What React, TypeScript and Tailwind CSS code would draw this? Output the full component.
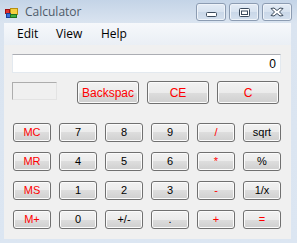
import React from "react";

const btnBase =
  "flex items-center justify-center rounded-[3px] border border-[#707070] bg-[linear-gradient(to_bottom,#f2f2f2_0%,#ebebeb_50%,#dddddd_50%,#cfcfcf_100%)] shadow-[inset_0_0_0_1px_#fbfbfb] text-[11px] leading-none font-['Liberation_Sans',Arial,sans-serif]";

function Btn({ label, red, className = "" }: { label: string; red?: boolean; className?: string }) {
  return (
    <div className={`${btnBase} ${red ? "text-[#ff0000]" : "text-black"} ${className}`}>{label}</div>
  );
}

function CaptionBtn({ children, w }: { children: React.ReactNode; w: string }) {
  return (
    <div
      className={`${w} h-[18px] flex items-center justify-center rounded-[3px] border border-[#8c9cb2] bg-[linear-gradient(to_bottom,#e4ecf6_0%,#d7e2ef_50%,#c9d7e8_50%,#d4e0ee_100%)] shadow-[inset_0_0_0_1px_#eef3f9]`}
    >
      {children}
    </div>
  );
}

export default function App() {
  const rows: { label: string; red?: boolean }[][] = [
    [{ label: "MC", red: true }, { label: "7" }, { label: "8" }, { label: "9" }, { label: "/", red: true }, { label: "sqrt" }],
    [{ label: "MR", red: true }, { label: "4" }, { label: "5" }, { label: "6" }, { label: "*", red: true }, { label: "%" }],
    [{ label: "MS", red: true }, { label: "1" }, { label: "2" }, { label: "3" }, { label: "-", red: true }, { label: "1/x" }],
    [{ label: "M+", red: true }, { label: "0" }, { label: "+/-" }, { label: "." }, { label: "+", red: true }, { label: "=", red: true }],
  ];
  return (
    <div className="w-[297px] h-[243px] overflow-hidden flex flex-col bg-[linear-gradient(to_bottom,#c4d4e7_0px,#dae4f0_23px,#dce6f2_100%)]">
      {/* Title bar */}
      <div className="h-[23px] flex items-start relative">
        <svg width="13" height="10" viewBox="0 0 13 10" className="ml-[5px] mt-[8px]">
          <rect x="0.5" y="1.5" width="4" height="4" fill="#e03030" stroke="#a01010" strokeWidth="1" />
          <rect x="5.5" y="0.5" width="7" height="6" fill="#f4d040" stroke="#b89010" strokeWidth="1" />
          <rect x="1.5" y="5.5" width="4" height="4" fill="#3a6fd8" stroke="#1a3f98" strokeWidth="1" />
          <rect x="5.5" y="6.5" width="6" height="3" fill="#40b040" stroke="#207020" strokeWidth="1" />
        </svg>
        <div className="ml-[7px] mt-[4px] text-[12px] leading-[16px] text-[#4d5a69] font-['Open_Sans',sans-serif]">
          Calculator
        </div>
        <div className="ml-auto mr-[5px] mt-[3px] flex gap-[3px]">
          <CaptionBtn w="w-[30px]">
            <svg width="11" height="6" viewBox="0 0 11 6" className="mt-[5px]">
              <rect x="0.5" y="0.5" width="10" height="4" rx="1" fill="#fff" stroke="#3b4a5c" />
            </svg>
          </CaptionBtn>
          <CaptionBtn w="w-[30px]">
            <svg width="11" height="9" viewBox="0 0 11 9">
              <rect x="0.5" y="0.5" width="10" height="8" rx="1" fill="#fff" stroke="#3b4a5c" />
              <rect x="2.5" y="3" width="6" height="3.5" fill="none" stroke="#3b4a5c" />
            </svg>
          </CaptionBtn>
          <CaptionBtn w="w-[30px]">
            <svg width="14" height="10" viewBox="0 0 14 10">
              <path
                d="M1 1.5 L4 1 L7 3.5 L10 1 L13 1.5 L9.5 5 L13 8.5 L10 9 L7 6.5 L4 9 L1 8.5 L4.5 5 Z"
                fill="#fff"
                stroke="#3b4a5c"
                strokeWidth="1"
                strokeLinejoin="round"
              />
            </svg>
          </CaptionBtn>
        </div>
      </div>
      {/* Client */}
      <div className="ml-[4px] w-[287px] h-[216px] bg-[#f0f0f0] flex flex-col">
        <div className="h-[22px] flex items-center pl-[13px] bg-[linear-gradient(to_bottom,#f6f8fb,#eaeff5)] text-[12px] text-black font-['Open_Sans',sans-serif]">
          <div className="w-[39px]">Edit</div>
          <div className="w-[45px]">View</div>
          <div>Help</div>
        </div>
        <div className="pl-[8px] pt-[9px] flex flex-col">
          <div className="w-[269px] h-[19px] bg-white border border-[#e3e9ef] border-t-[#abadb3] flex items-center justify-end pr-[4px] text-[12px] font-['Liberation_Sans',Arial,sans-serif] text-black">
            0
          </div>
          <div className="mt-[8px] flex items-start">
            <div className="mt-[1px] w-[45px] h-[18px] border border-[#adadad] border-r-[#e3e3e3] border-b-[#e3e3e3] bg-[#f0f0f0]" />
            <Btn label="Backspac" red className="ml-[20px] w-[62px] h-[23px] text-[12px]" />
            <Btn label="CE" red className="ml-[8px] w-[62px] h-[23px] text-[12px]" />
            <Btn label="C" red className="ml-[8px] w-[62px] h-[23px] text-[12px]" />
          </div>
          <div className="mt-[19px] ml-[1px] grid grid-cols-[repeat(6,38px)] gap-x-[8px] gap-y-[10px]">
            {rows.flat().map((b, i) => (
              <Btn key={i} label={b.label} red={b.red} className="h-[19px]" />
            ))}
          </div>
        </div>
      </div>
    </div>
  );
}
